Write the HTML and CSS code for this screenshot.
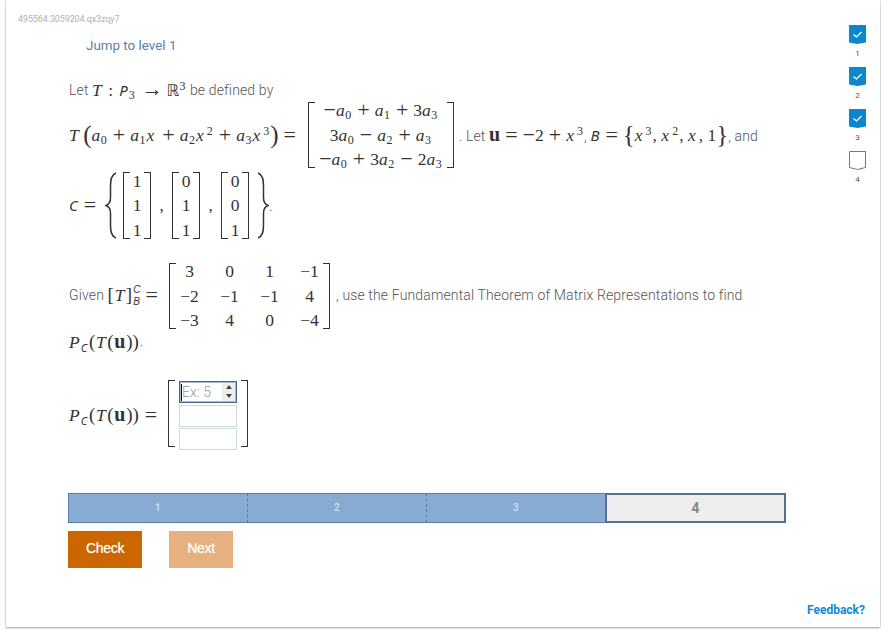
FILE: index.html
```html
<!DOCTYPE html>
<html lang="en">
<head>
<meta charset="utf-8">
<title>Jump to level 1</title>
<link rel="stylesheet" href="styles.css">
</head>
<body>
<div class="card">
  <div class="main">
    <div class="uid">495564.3059204.qx3zqy7</div>
    <div class="content">
      <div class="jump">Jump to level 1</div>

      <div class="line row1">Let&nbsp;<span class="m"><i>T</i><span class="rel colon">:</span><span class="cal">P</span><sub>3</sub><span class="rel arrow">→</span><span class="bb">ℝ</span><sup>3</sup></span>&nbsp;be defined by</div>

      <div class="line row2">
        <span class="m"><i>T</i><span class="big lp">(</span><i>a</i><sub>0</sub><span class="op">+</span><i>a</i><sub>1</sub><i class="x">x</i><span class="op">+</span><i>a</i><sub>2</sub><i class="x">x</i><sup>2</sup><span class="op">+</span><i>a</i><sub>3</sub><i class="x">x</i><sup>3</sup><span class="big">)</span><span class="rel">=</span></span>
        <div class="matrix m vec3">
          <span><span class="neg">−</span><i>a</i><sub>0</sub><span class="op">+</span><i>a</i><sub>1</sub><span class="op">+</span>3<i>a</i><sub>3</sub></span>
          <span>3<i>a</i><sub>0</sub><span class="op">−</span><i>a</i><sub>2</sub><span class="op">+</span><i>a</i><sub>3</sub></span>
          <span><span class="neg">−</span><i>a</i><sub>0</sub><span class="op">+</span>3<i>a</i><sub>2</sub><span class="op">−</span>2<i>a</i><sub>3</sub></span>
        </div>
        <span class="after">.&nbsp;Let&nbsp;<span class="m"><b>u</b><span class="rel">=</span><span class="neg">−</span>2<span class="op">+</span><i class="x">x</i><sup>3</sup></span>,&nbsp;<span class="m"><span class="cal">B</span><span class="rel">=</span><span class="big">{</span><i class="x">x</i><sup>3</sup>,&nbsp;<i class="x">x</i><sup>2</sup>,&nbsp;<i class="x">x</i>,&nbsp;1<span class="big">}</span></span>, and</span>
      </div>

      <div class="line row3">
        <span class="m"><span class="cal">C</span><span class="rel">=</span></span>
        <svg class="brace" viewBox="0 0 12 68" aria-hidden="true"><path d="M11 1C6 3 5.500 8 5.500 14V26C5.500 30 4 33 1 34C4 35 5.500 38 5.500 42V54C5.500 60 6 65 11 67" fill="none" stroke="#333" stroke-width="1.500"/></svg>
        <div class="matrix m unit"><span>1</span><span>1</span><span>1</span></div>
        <span class="m comma">,</span>
        <div class="matrix m unit"><span>0</span><span>1</span><span>1</span></div>
        <span class="m comma">,</span>
        <div class="matrix m unit"><span>0</span><span>0</span><span>1</span></div>
        <svg class="brace right" viewBox="0 0 12 68" aria-hidden="true"><path d="M1 1C6 3 6.500 8 6.500 14V26C6.500 30 8 33 11 34C8 35 6.500 38 6.500 42V54C6.500 60 6 65 1 67" fill="none" stroke="#333" stroke-width="1.500"/></svg>
        <span>.</span>
      </div>

      <div class="line row4">
        <span class="up">Given&nbsp;</span><span class="m"><span class="paren lb">[</span><i>T</i><span class="paren">]</span><span class="scripts"><span>C</span><span>B</span></span><span class="rel">=</span></span>
        <div class="matrix m grid4">
          <span>3</span><span>0</span><span>1</span><span>−1</span>
          <span>−2</span><span>−1</span><span>−1</span><span>4</span>
          <span>−3</span><span>4</span><span>0</span><span>−4</span>
        </div>
        <span class="after2 up">, use the Fundamental Theorem of Matrix Representations to find</span>
      </div>

      <div class="line row5"><span class="m"><i class="p">P</i><sub class="cal">C</sub><span class="paren">(</span><i>T</i><span class="paren">(</span><b>u</b><span class="paren">))</span></span>.</div>

      <div class="line row6">
        <span class="m"><i class="p">P</i><sub class="cal">C</sub><span class="paren">(</span><i>T</i><span class="paren">(</span><b>u</b><span class="paren">))</span><span class="rel">=</span></span>
        <div class="matrix inputs">
          <input type="number" placeholder="Ex: 5" autofocus aria-label="Row 1">
          <input type="text" aria-label="Row 2">
          <input type="text" aria-label="Row 3">
          <span class="caret"></span>
          <span class="spin"></span>
        </div>
      </div>

      <div class="levels">
        <div class="level">1</div>
        <div class="level">2</div>
        <div class="level">3</div>
        <div class="level current">4</div>
      </div>

      <div class="actions">
        <button class="btn check" type="button">Check</button>
        <button class="btn next" type="button">Next</button>
      </div>

      <div class="feedback">Feedback?</div>
    </div>
  </div>

  <div class="side">
    <div class="step"><svg viewBox="0 0 17 19" aria-hidden="true"><path d="M0 0H17V17.500L8.500 19L0 17.500Z" fill="#0b87d0"/><path d="M4.500 9.500L7.500 12L12.500 7" fill="none" stroke="#fff" stroke-width="1.200"/></svg><span>1</span></div>
    <div class="step"><svg viewBox="0 0 17 19" aria-hidden="true"><path d="M0 0H17V17.500L8.500 19L0 17.500Z" fill="#0b87d0"/><path d="M4.500 9.500L7.500 12L12.500 7" fill="none" stroke="#fff" stroke-width="1.200"/></svg><span>2</span></div>
    <div class="step"><svg viewBox="0 0 17 19" aria-hidden="true"><path d="M0 0H17V17.500L8.500 19L0 17.500Z" fill="#0b87d0"/><path d="M4.500 9.500L7.500 12L12.500 7" fill="none" stroke="#fff" stroke-width="1.200"/></svg><span>3</span></div>
    <div class="step"><svg viewBox="0 0 17 19" aria-hidden="true"><path d="M.500.500H16.500V16.500L8.500 18.500L.500 16.500Z" fill="#fff" stroke="#777" stroke-width="1"/></svg><span>4</span></div>
  </div>
</div>
</body>
</html>
```

FILE: styles.css
```css
* { box-sizing: border-box; }
html, body { margin: 0; padding: 0; background: #fff; }
body { font-family: Roboto, "Liberation Sans", sans-serif; font-weight: 300; font-size: 14px; letter-spacing: .14px; color: #555; width: 881px; height: 631px; overflow: hidden; }

.card { display: flex; margin-left: 6px; width: 874px; height: 627px; background: #fff; box-shadow: 0 1px 2px rgba(0,0,0,.35), 0 0 2px rgba(0,0,0,.12); }
.main { flex: 1; padding: 14px 0 0 12px; min-width: 0; }
.uid { height: 10px; line-height: 10px; font-size: 9px; font-weight: 400; color: #b0b0b0; letter-spacing: -.12px; }
.content { margin-left: 50px; }
.jump { margin: 13px 0 0 18px; height: 18px; line-height: 18px; font-size: 13.400px; font-weight: 400; letter-spacing: 0; color: #5a7fa8; }

.line { display: flex; align-items: center; white-space: nowrap; padding-left: 1px; }
.row1 { margin-top: 26px; height: 18px; }
.row2 { margin-top: 3px; height: 66px; }
.row3 { margin-top: 4px; height: 67px; }
.row4 { margin-top: 24px; height: 66px; }
.row5 { margin-top: 3px; height: 18px; }
.row6 { margin-top: 30px; height: 69px; }
.up { margin-bottom: 2px; }

.m { font-family: "Liberation Serif", serif; font-size: 17.500px; font-weight: 400; letter-spacing: 0; color: #333; }
.m i { font-style: italic; padding-right: .5px; }
.m i.x { padding-right: 3px; }
.m i.p { padding-right: 1px; }
.m b { font-weight: 700; font-size: 20px; }
.m sub, .m sup { font-size: 12px; line-height: 0; padding-right: 1px; }
.m sub { vertical-align: -3px; }
.m sup { vertical-align: 6px; }
.op, .rel, .neg { font-size: 22px; line-height: 0; vertical-align: -1px; font-weight: 300; }
.op { margin: 0 5px; }
.rel { margin: 0 5px; }
.colon { margin: 0 6px; font-size: 17.500px; vertical-align: 0; }
.arrow { margin: 0 4px 0 6px; font-size: 21px; vertical-align: 0; }
.big { font-size: 25px; line-height: 0; vertical-align: -2px; }
.lp { margin-left: 4px; }
.paren { font-size: 19px; padding: 0 .8px; }
.lb { padding-left: 0; }
.cal { font-family: "Noto Sans", sans-serif; font-size: 15px; font-style: italic; padding-right: 1px; }
.m sub.cal { font-size: 11px; vertical-align: -4px; }
.bb { font-family: "DejaVu Sans", sans-serif; font-size: 16px; }

.scripts { display: inline-flex; flex-direction: column; vertical-align: middle; margin-left: .5px; font: italic 10px/12px "Liberation Sans", sans-serif; }

.matrix { position: relative; display: grid; justify-items: center; align-items: center; margin-left: 6px; flex: none; }
.matrix::before, .matrix::after { content: ""; position: absolute; top: 0; bottom: 0; width: 6px; border: 1.500px solid #333; }
.matrix::before { left: 0; border-right: 0; }
.matrix::after { right: 0; border-left: 0; }

.vec3 { width: 146px; height: 66px; margin-left: 7px; grid-auto-rows: 24.500px; align-content: center; }
.unit { width: 28px; height: 67px; grid-auto-rows: 24.500px; align-content: center; margin: 0; }
.comma { width: 21px; text-align: center; }
.brace { width: 12px; height: 67px; margin: 0 6px 0 4px; flex: none; }
.brace.right { margin: 0 0 0 8px; }
.grid4 { width: 161px; height: 66px; grid-template-columns: repeat(4, 40px); grid-auto-rows: 24.500px; align-content: center; justify-content: center; }
.after { margin: 0 0 2px 5px; }
.after2 { margin-left: 6px; }

.inputs { width: 80px; height: 69px; grid-template-columns: 58px; justify-content: center; align-content: start; row-gap: 1.500px; padding-top: 1px; }
.inputs::before, .inputs::after { bottom: 2px; }
.inputs input { width: 58px; height: 22px; border: 1px solid #cfd8dc; background: #fff; padding: 0 2px; font: 300 14px Roboto, sans-serif; color: #444; outline: none; border-radius: 0; appearance: textfield; caret-color: transparent; }
.inputs input:focus { border-color: #46648f; box-shadow: inset 0 0 0 1px #a9bbd2; }
.inputs input::placeholder { color: #999; }
.inputs input[type=number]::-webkit-inner-spin-button { display: none; }
.caret { position: absolute; left: 13px; top: 4px; width: 1px; height: 17px; background: #111; }
.spin { position: absolute; left: 54px; top: 3px; width: 13px; height: 18px; background: #eee; }
.spin::before, .spin::after { content: ""; position: absolute; left: 3.500px; border: 3px solid transparent; }
.spin::before { top: 2px; border-bottom: 4px solid #444; border-top: 0; }
.spin::after { bottom: 3px; border-top: 4px solid #444; border-bottom: 0; }

.levels { display: flex; margin-top: 44px; height: 30px; }
.level { width: 179px; background: #87abd2; border: 1px solid #5a7ba3; border-left: 0; border-right: 1px dashed #5a7ba3; color: #d6e2ef; font: 500 10px/28px Roboto, sans-serif; text-align: center; }
.level:first-child { width: 180px; border-left: 1px solid #5a7ba3; }
.level.current { width: 181px; margin-left: -1px; background: #eee; border: 2px solid #566f95; color: #888; font-size: 14px; font-weight: 700; line-height: 26px; }

.actions { display: flex; gap: 27px; margin-top: 8px; }
.btn { height: 37px; border: 0; padding: 0 0 3px; color: #fff; font: 400 14px "Liberation Sans", Arial, sans-serif; letter-spacing: -.3px; text-shadow: 0 0 1px rgba(255,255,255,.6); }
.check { width: 74px; background: #c60; }
.next { width: 64px; background: #e6b17e; }

.feedback { margin: 35px -16px 0 0; text-align: right; font-size: 12px; font-weight: 700; letter-spacing: 0; line-height: 14px; color: #0f8ad4; }

.side { flex: none; width: 17px; margin-right: 14px; padding-top: 25px; }
.step { height: 42px; display: flex; flex-direction: column; align-items: center; }
.step svg { width: 17px; height: 19px; flex: none; }
.step span { margin-top: 5px; font-size: 8px; line-height: 10px; font-weight: 400; color: #555; }
```
